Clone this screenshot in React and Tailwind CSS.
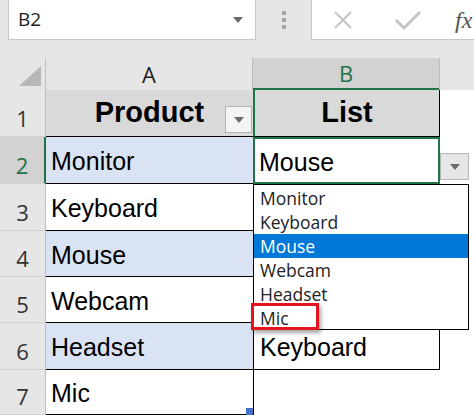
import React from 'react';

const rows = [
  { n: 1, a: 'Product', b: 'List', head: true },
  { n: 2, a: 'Monitor', b: 'Mouse', fill: true, active: true },
  { n: 3, a: 'Keyboard', b: '' },
  { n: 4, a: 'Mouse', b: '', fill: true },
  { n: 5, a: 'Webcam', b: '' },
  { n: 6, a: 'Headset', b: 'Keyboard', fill: true },
  { n: 7, a: 'Mic', b: '' },
];

const heights = ['h-[47px]', 'h-[47px]', 'h-[47px]', 'h-[46px]', 'h-[46px]', 'h-[47px]', 'h-[45px]'];

const listItems = ['Monitor', 'Keyboard', 'Mouse', 'Webcam', 'Headset', 'Mic'];

function Caret({ className }) {
  return (
    <svg width="10" height="6" viewBox="0 0 10 6" className={className}>
      <path d="M0 0 L10 0 L5 6 Z" fill="#6b6b6b" />
    </svg>
  );
}

export default function App() {
  return (
    <div className="relative w-[474px] h-[415px] overflow-hidden bg-white font-['Liberation_Sans',Arial,sans-serif]">
      {/* formula bar */}
      <div className="h-[58px] bg-[#e6e6e6] flex items-start">
        <div className="ml-[8px] w-[248px] h-[40px] bg-white border-x border-b border-[#c6c6c6] flex items-center justify-between pl-[9px] pr-[12px]">
          <span className="text-[19px] text-[#222] font-['Open_Sans',sans-serif]">B2</span>
          <Caret />
        </div>
        <div className="w-[55px] h-[40px] flex flex-col items-center justify-center gap-[3px]">
          <div className="w-[4px] h-[4px] bg-[#a6a6a6]" />
          <div className="w-[4px] h-[4px] bg-[#a6a6a6]" />
          <div className="w-[4px] h-[4px] bg-[#a6a6a6]" />
        </div>
        <div className="flex-1 h-[40px] bg-white border-l border-b border-[#c6c6c6] flex items-center overflow-hidden">
          <svg width="22" height="22" viewBox="0 0 22 22" className="ml-[20px] shrink-0">
            <path d="M3 3 L19 19 M19 3 L3 19" stroke="#c4c4c4" strokeWidth="2" />
          </svg>
          <svg width="28" height="22" viewBox="0 0 28 22" className="ml-[40px] shrink-0">
            <path d="M2 11 L10 19 L26 3" stroke="#c4c4c4" strokeWidth="3" fill="none" />
          </svg>
          <span className="ml-[33px] text-[24px] italic text-[#555] font-['Liberation_Serif',serif] whitespace-nowrap">fx</span>
        </div>
      </div>

      {/* column headers */}
      <div className="flex h-[32px] bg-[#e6e6e6]">
        <div className="w-[46px] h-full border-r border-[#bdbdbd] flex items-end justify-end pr-[4px] pb-[4px]">
          <svg width="22" height="20" viewBox="0 0 22 20">
            <path d="M22 0 L22 20 L0 20 Z" fill="#b7b7b7" />
          </svg>
        </div>
        <div className="w-[207px] h-full border-r border-[#bdbdbd] flex items-center justify-center text-[22px] text-[#222] font-['Open_Sans',sans-serif]">A</div>
        <div className="w-[186px] h-full bg-[#d2d2d2] border-b-2 border-[#217346] flex items-center justify-center text-[22px] text-[#217346] font-['Open_Sans',sans-serif]">B</div>
        <div className="flex-1 h-full border-l border-[#bdbdbd]" />
      </div>

      {/* rows */}
      {rows.map((r, i) => (
        <div key={r.n} className={`flex ${heights[i]}`}>
          <div
            className={`w-[46px] h-full border-b border-[#cfcfcf] flex items-end justify-center pb-[1px] text-[22px] font-['Open_Sans',sans-serif] ${
              r.active ? 'bg-[#d2d2d2] text-[#217346] border-r-2 border-r-[#217346]' : 'bg-[#e6e6e6] text-[#333] border-r border-r-[#bdbdbd]'
            }`}
          >
            {r.n}
          </div>
          <div
            className={`relative w-[207px] h-full border-b border-black flex items-center text-[25px] text-black ${
              r.head ? 'bg-[#d9d9d9] justify-center font-bold text-[29px]' : r.fill ? 'bg-[#dae3f3] pl-[5px] pt-[4px]' : 'bg-white pl-[5px] pt-[4px]'
            }`}
          >
            {r.a}
            {r.head && (
              <div className="absolute right-[1px] top-[16px] w-[27px] h-[27px] bg-[#f4f4f4] border border-[#b3b3b3] flex items-center justify-center">
                <Caret />
              </div>
            )}
          </div>
          <div
            className={`w-[187px] h-full flex items-center text-black ${
              r.head
                ? 'bg-[#d9d9d9] justify-center font-bold text-[29px] border-l-2 border-l-[#217346] border-r border-r-black border-b border-b-black'
                : r.active
                ? 'bg-white text-[25px] pl-[4px] pt-[4px] border-2 border-[#217346]'
                : r.n === 6
                ? 'bg-white text-[25px] pl-[6px] pt-[2px] border border-black'
                : 'bg-white border-l border-black'
            }`}
          >
            {r.b}
          </div>
          <div className="flex-1 h-full bg-white" />
        </div>
      ))}

      {/* data validation arrow */}
      <div className="absolute left-[440px] top-[153px] w-[29px] h-[27px] bg-[#e6e6e6] border border-[#b5b5b5] flex items-center justify-center">
        <Caret />
      </div>

      {/* dropdown list */}
      <div className="absolute left-[253px] top-[184px] w-[216px] h-[146px] bg-white border border-black pt-[1px] font-['Open_Sans',sans-serif] text-[17.5px]">
        {listItems.map((it) => (
          <div
            key={it}
            className={`h-[24px] leading-[24px] pl-[6px] ${it === 'Mouse' ? 'bg-[#0078d7] text-white' : 'text-[#222]'}`}
          >
            {it}
          </div>
        ))}
      </div>

      {/* red highlight */}
      <div className="absolute left-[251px] top-[303px] w-[68px] h-[27px] border-[3px] border-[#e3141e] shadow-[2px_3px_4px_rgba(0,0,0,0.35)]" />

      {/* fill handle mark */}
      <div className="absolute left-[246px] top-[408px] w-[7px] h-[7px] bg-[#4472c4]" />
    </div>
  );
}
